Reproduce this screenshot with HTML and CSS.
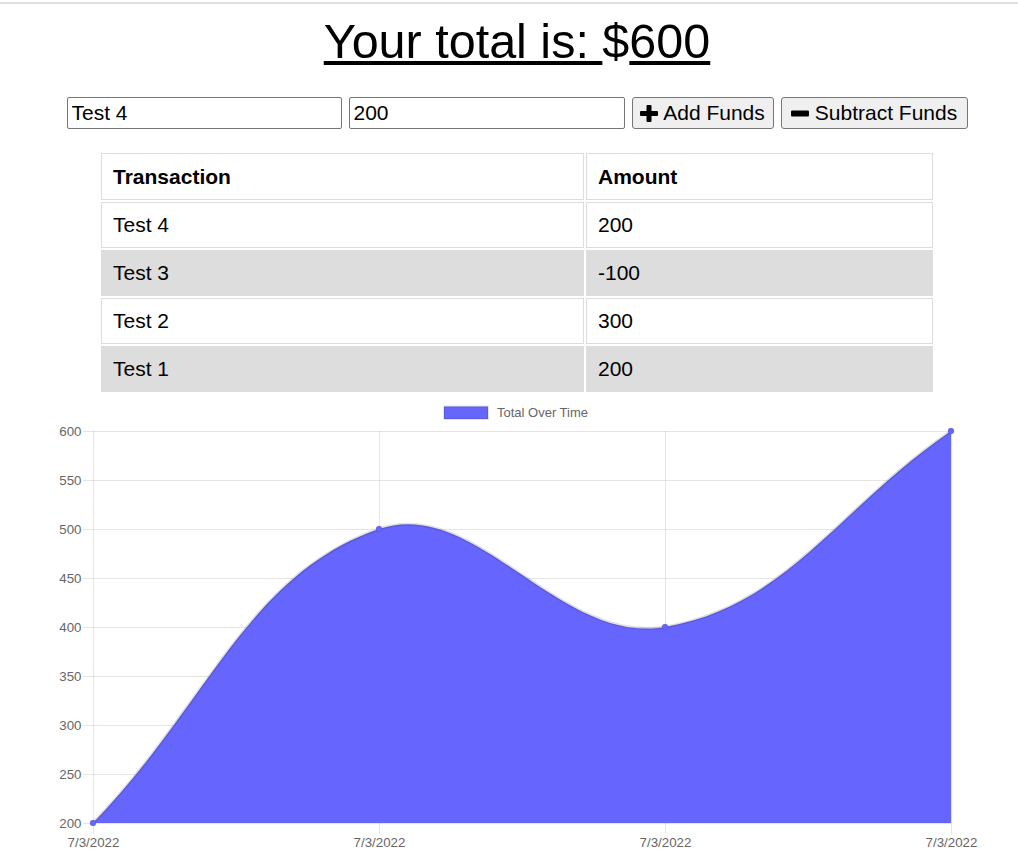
FILE: index.html
```html
<!DOCTYPE html>
<html lang="en">
<head>
<meta charset="utf-8">
<title>Budget Tracker</title>
<link rel="stylesheet" href="styles.css">
</head>
<body>
<div class="topbar"></div>
<main class="main">
  <h1 class="total"><span class="u">Your total is: </span>$<span class="u">600</span></h1>
  <form class="entry">
    <input type="text" class="field" value="Test 4">
    <input type="text" class="field field-amount" value="200">
    <button type="button" class="btn btn-add"><svg class="ico" width="18" height="17" viewBox="0 0 18 17"><rect x="6.5" y="0" width="5" height="17" rx="1"/><rect x="0" y="6" width="18" height="5" rx="1"/></svg>Add Funds</button>
    <button type="button" class="btn btn-sub"><svg class="ico ico-minus" width="18" height="17" viewBox="0 0 18 17"><rect x="0" y="5.5" width="18" height="6" rx="1"/></svg>Subtract Funds</button>
  </form>
  <table class="tx">
    <thead>
      <tr><th class="c-name">Transaction</th><th class="c-amt">Amount</th></tr>
    </thead>
    <tbody>
      <tr><td>Test 4</td><td>200</td></tr>
      <tr class="alt"><td>Test 3</td><td>-100</td></tr>
      <tr><td>Test 2</td><td>300</td></tr>
      <tr class="alt"><td>Test 1</td><td>200</td></tr>
    </tbody>
  </table>
</main>
<svg class="chart" width="1018" height="474" viewBox="0 394 1018 474">
  <g class="legend">
    <rect x="444" y="406.5" width="44" height="12.5" class="legend-box"/>
    <text x="497" y="416.7" class="legend-text">Total Over Time</text>
  </g>
  <g class="grid">
    <line x1="83" y1="431.5" x2="951" y2="431.5"/>
    <line x1="83" y1="480.5" x2="951" y2="480.5"/>
    <line x1="83" y1="529.5" x2="951" y2="529.5"/>
    <line x1="83" y1="578.5" x2="951" y2="578.5"/>
    <line x1="83" y1="627.5" x2="951" y2="627.5"/>
    <line x1="83" y1="676.5" x2="951" y2="676.5"/>
    <line x1="83" y1="725.5" x2="951" y2="725.5"/>
    <line x1="83" y1="774.5" x2="951" y2="774.5"/>
    <line x1="83" y1="823.5" x2="951" y2="823.5"/>
    <line x1="93.5" y1="431" x2="93.5" y2="834"/>
    <line x1="379.5" y1="431" x2="379.5" y2="834"/>
    <line x1="665.5" y1="431" x2="665.5" y2="834"/>
    <line x1="951.5" y1="431" x2="951.5" y2="834"/>
  </g>
  <g class="ylabels">
    <text x="81.5" y="435.7">600</text>
    <text x="81.5" y="484.7">550</text>
    <text x="81.5" y="533.7">500</text>
    <text x="81.5" y="582.7">450</text>
    <text x="81.5" y="631.7">400</text>
    <text x="81.5" y="680.7">350</text>
    <text x="81.5" y="729.7">300</text>
    <text x="81.5" y="778.7">250</text>
    <text x="81.5" y="827.7">200</text>
  </g>
  <g class="xlabels">
    <text x="93.5" y="846.5">7/3/2022</text>
    <text x="379.5" y="846.5">7/3/2022</text>
    <text x="665.5" y="846.5">7/3/2022</text>
    <text x="951.5" y="846.5">7/3/2022</text>
  </g>
  <path class="area" d="M93,823 C207.4,705.4 247.3,574.1 379,529 C476.1,495.7 558.4,645.3 665,627 C787.2,606.1 836.6,509.4 951,431 L951,823 Z"/>
  <path class="line" d="M93,823 C207.4,705.4 247.3,574.1 379,529 C476.1,495.7 558.4,645.3 665,627 C787.2,606.1 836.6,509.4 951,431"/>
  <g class="points">
    <circle cx="93" cy="823" r="3"/>
    <circle cx="379" cy="529" r="3"/>
    <circle cx="665" cy="627" r="3"/>
    <circle cx="951" cy="431" r="3"/>
  </g>
</svg>
</body>
</html>
```

FILE: styles.css
```css
html, body {
  margin: 0;
  background: #ffffff;
}

body {
  padding-top: 2px;
  font-family: "Liberation Sans", Arial, sans-serif;
  color: #000;
  overflow: hidden;
}

.topbar {
  height: 2px;
  background: #dedede;
}

.main {
  padding-left: 16px;
}

.total {
  margin: 9px 0 0;
  font-size: 48.5px;
  font-weight: normal;
  line-height: 56px;
  text-align: center;
}

.u {
  text-decoration: underline;
}

.entry {
  display: flex;
  justify-content: center;
  gap: 7px;
  margin: 28px 0 0;
  height: 32px;
}

.field {
  box-sizing: border-box;
  width: 275px;
  height: 32px;
  margin: 0;
  padding: 1px 4px;
  border: 1px solid #767676;
  border-radius: 2px;
  background: #fff;
  font-family: "Liberation Sans", Arial, sans-serif;
  font-size: 21px;
  color: #000;
}

.field-amount {
  width: 276px;
}

.btn {
  box-sizing: border-box;
  display: inline-flex;
  align-items: center;
  justify-content: center;
  height: 32px;
  margin: 0;
  padding: 0 7px;
  border: 1px solid #767676;
  border-radius: 3px;
  background: #efefef;
  font-family: "Liberation Sans", Arial, sans-serif;
  font-size: 21px;
  color: #000;
}

.btn-add {
  width: 142px;
}

.btn-sub {
  width: 187px;
}

.ico {
  flex: none;
  margin-right: 5px;
  fill: #000;
}

.ico-minus {
  margin-right: 6px;
}

.tx {
  width: 836px;
  margin: 22px auto 0;
  border-collapse: separate;
  border-spacing: 2px;
  font-size: 21px;
}

.tx th,
.tx td {
  border: 1px solid #dddddd;
  padding: 10px 11px;
  line-height: 24px;
  text-align: left;
}

.tx th {
  font-weight: bold;
  line-height: 25px;
}

.c-name {
  width: 459px;
}

.c-amt {
  width: 323px;
}

.tx .alt td {
  background: #dddddd;
}

.chart {
  display: block;
  font-family: "Liberation Sans", Arial, sans-serif;
}

.grid line {
  stroke: rgba(0, 0, 0, 0.1);
  stroke-width: 1;
}

.ylabels text {
  font-size: 13.3px;
  fill: #666666;
  text-anchor: end;
}

.xlabels text {
  font-size: 13.3px;
  fill: #666666;
  text-anchor: middle;
}

.legend-box {
  fill: #6666ff;
  stroke: rgba(0, 0, 0, 0.1);
  stroke-width: 2;
}

.legend-text {
  font-size: 13px;
  fill: #666666;
}

.area {
  fill: #6666ff;
}

.line {
  fill: none;
  stroke: rgba(0, 0, 0, 0.12);
  stroke-width: 3;
}

.points circle {
  fill: #6666ff;
  stroke: rgba(0, 0, 0, 0.1);
  stroke-width: 1;
}
```
